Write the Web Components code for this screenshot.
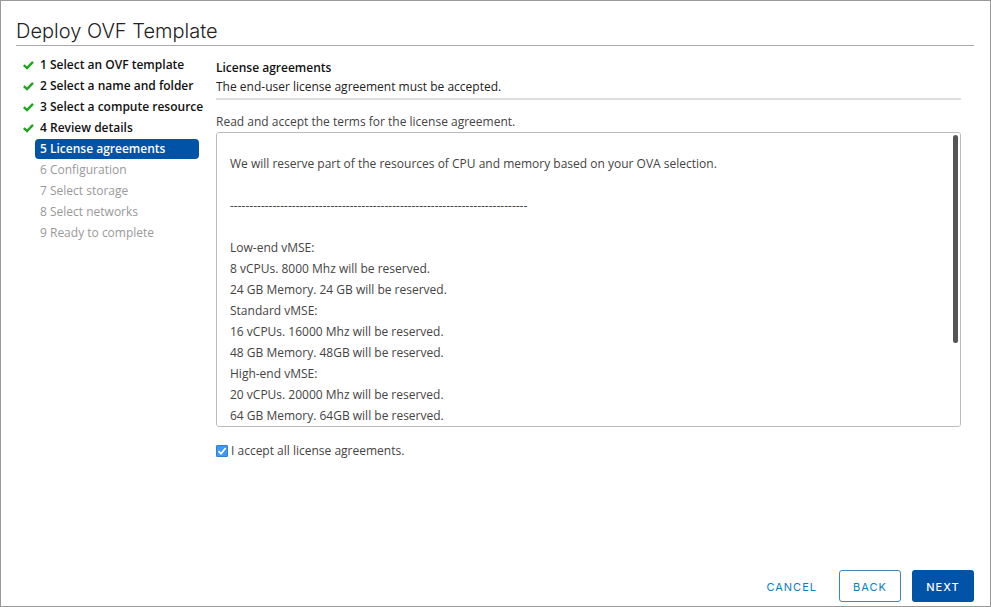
<!DOCTYPE html>
<html lang="en">
<head>
<meta charset="utf-8">
<title>Deploy OVF Template</title>
<style>
    html, body {
        height: 100%;
        margin: 0;
    }
    body {
        background: #fff;
        color: #444;
        font-family: "Open Sans", sans-serif;
        font-size: 12px;
        line-height: 21px;
    }
</style>
</head>
<body>

<ovf-wizard>
    <span slot="title">Deploy OVF Template</span>

    <wizard-step slot="steps" state="done">1 Select an OVF template</wizard-step>
    <wizard-step slot="steps" state="done">2 Select a name and folder</wizard-step>
    <wizard-step slot="steps" state="done">3 Select a compute resource</wizard-step>
    <wizard-step slot="steps" state="done">4 Review details</wizard-step>
    <wizard-step slot="steps" state="current">5 License agreements</wizard-step>
    <wizard-step slot="steps">6 Configuration</wizard-step>
    <wizard-step slot="steps">7 Select storage</wizard-step>
    <wizard-step slot="steps">8 Select networks</wizard-step>
    <wizard-step slot="steps">9 Ready to complete</wizard-step>

    <license-page></license-page>

    <wizard-button slot="actions" kind="link">Cancel</wizard-button>
    <wizard-button slot="actions" kind="outline">Back</wizard-button>
    <wizard-button slot="actions" kind="primary">Next</wizard-button>
</ovf-wizard>

<script>
class OvfWizard extends HTMLElement {

    constructor() {
        super();
        this.attachShadow({mode: "open"});
        this.shadowRoot.innerHTML = `
            <style>
                :host {
                    display: flex;
                    flex-direction: column;
                    box-sizing: border-box;
                    min-height: 100%;
                    padding: 17px 16px 4px 15px;
                    border: 1px solid #999;
                }
                h1 {
                    margin: 0;
                    padding-bottom: 1px;
                    border-bottom: 1px solid #aaa;
                    color: #222;
                    font-family: Inter, sans-serif;
                    font-size: 20px;
                    font-weight: 300;
                    line-height: 26px;
                }
                .columns {
                    display: grid;
                    grid-template-columns: 183px 1fr;
                    column-gap: 17px;
                    flex: 1;
                    padding-top: 8px;
                }
                footer {
                    display: flex;
                    justify-content: flex-end;
                    gap: 11px;
                }
            </style>
            <h1><slot name="title"></slot></h1>
            <div class="columns">
                <nav aria-label="Steps"><slot name="steps"></slot></nav>
                <main><slot></slot></main>
            </div>
            <footer><slot name="actions"></slot></footer>
        `;
    }

}

class WizardStep extends HTMLElement {

    constructor() {
        super();
        this.attachShadow({mode: "open"});
        this.shadowRoot.innerHTML = `
            <style>
                :host {
                    display: flex;
                    align-items: center;
                    height: 21px;
                    color: #999;
                }
                :host([state]) {
                    color: #111;
                    font-weight: 600;
                }
                svg {
                    flex: none;
                    width: 11px;
                    height: 10px;
                    margin-left: 7px;
                    visibility: hidden;
                }
                :host([state="done"]) svg {
                    visibility: visible;
                }
                span {
                    flex: 1;
                    min-width: 0;
                    margin-left: 1px;
                    padding-left: 5px;
                    border-radius: 4px;
                    line-height: 20px;
                    white-space: nowrap;
                }
                :host([state="current"]) span {
                    background: #0153a8;
                    color: #fff;
                }
            </style>
            <svg viewBox="0 0 11 10" aria-hidden="true">
                <path d="M0.8 5.2 L4 8 L10 1.8" fill="none" stroke="#1fa51f" stroke-width="2.4"/>
            </svg>
            <span><slot></slot></span>
        `;
    }

}

class LicensePage extends HTMLElement {

    constructor() {
        super();
        this.attachShadow({mode: "open"});
        this.shadowRoot.innerHTML = `
            <style>
                :host {
                    display: block;
                    padding: 4px 13px 0 0;
                }
                header {
                    padding-bottom: 2px;
                    border-bottom: 2px solid #ddd;
                    line-height: 19px;
                }
                h2 {
                    margin: 0;
                    color: #111;
                    font-size: 12px;
                    font-weight: 600;
                }
                p {
                    margin: 0;
                    color: #222;
                }
                .terms {
                    display: block;
                    margin-top: 11px;
                }
                .box {
                    position: relative;
                }
                .box::after {
                    content: "";
                    position: absolute;
                    top: 3px;
                    right: 3px;
                    width: 5px;
                    height: 208px;
                    border-radius: 3px;
                    background: #555;
                }
                textarea {
                    display: block;
                    box-sizing: border-box;
                    width: 100%;
                    height: 295px;
                    padding: 20px 14px 0 13px;
                    border: 1px solid #bbb;
                    border-radius: 3px;
                    background: #fff;
                    color: inherit;
                    font: inherit;
                    resize: none;
                    outline: none;
                    scrollbar-width: none;
                }
                .accept {
                    display: flex;
                    align-items: center;
                    gap: 3px;
                    margin-top: 13px;
                }
                input {
                    appearance: none;
                    width: 12px;
                    height: 12px;
                    margin: 0;
                    border: 1px solid #2f7fd6;
                    border-radius: 1px;
                }
                input:checked {
                    background: #3f97f6 url("data:image/svg+xml,%3Csvg xmlns='http://www.w3.org/2000/svg' viewBox='0 0 10 10'%3E%3Cpath d='M1.5 5.2 L4 7.8 L8.7 2' fill='none' stroke='white' stroke-width='1.7'/%3E%3C/svg%3E") center / 10px 10px no-repeat;
                }
            </style>
            <header>
                <h2>License agreements</h2>
                <p>The end-user license agreement must be accepted.</p>
            </header>
            <label class="terms" for="terms">Read and accept the terms for the license agreement.</label>
            <div class="box"><textarea id="terms" readonly></textarea></div>
            <label class="accept"><input type="checkbox" checked>I accept all license agreements.</label>
        `;
        this.shadowRoot.querySelector("textarea").value = [
            "We will reserve part of the resources of CPU and memory based on your OVA selection.",
            "",
            "-".repeat(77),
            "",
            "Low-end vMSE:",
            "8 vCPUs. 8000 Mhz will be reserved.",
            "24 GB Memory. 24 GB will be reserved.",
            "Standard vMSE:",
            "16 vCPUs. 16000 Mhz will be reserved.",
            "48 GB Memory. 48GB will be reserved.",
            "High-end vMSE:",
            "20 vCPUs. 20000 Mhz will be reserved.",
            "64 GB Memory. 64GB will be reserved."
        ].join("\n") + "\n".repeat(6);
    }

}

class WizardButton extends HTMLElement {

    constructor() {
        super();
        this.attachShadow({mode: "open"});
        this.shadowRoot.innerHTML = `
            <style>
                :host {
                    display: block;
                }
                button {
                    height: 32px;
                    min-width: 62px;
                    padding: 2px 10px 0;
                    border: 1px solid transparent;
                    border-radius: 3px;
                    background: none;
                    color: #0a7cc0;
                    font-family: Inter, sans-serif;
                    font-size: 11px;
                    letter-spacing: 1px;
                    text-transform: uppercase;
                }
                :host([kind="outline"]) button {
                    border-color: #3b85c0;
                }
                :host([kind="primary"]) button {
                    background: #0153a8;
                    color: #fff;
                    font-weight: 500;
                }
            </style>
            <button type="button"><slot></slot></button>
        `;
    }

}

customElements.define("ovf-wizard", OvfWizard);
customElements.define("wizard-step", WizardStep);
customElements.define("license-page", LicensePage);
customElements.define("wizard-button", WizardButton);
</script>
</body>
</html>
